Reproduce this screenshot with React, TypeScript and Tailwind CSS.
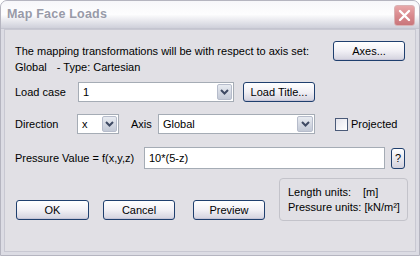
import { ReactNode } from 'react';

const font = { fontFamily: '"Liberation Sans", Arial, sans-serif' };

const XpButton = ({ children, className = '' }: { children: ReactNode; className?: string }) => (
  <div
    className={`flex items-center justify-center h-[20px] rounded-[3px] border border-[#1f3f6e] bg-linear-to-b from-[#ffffff] via-[#f1f0f5] to-[#d3d2de] text-[11px] text-black shadow-[inset_0_-1px_0_#c6c5d7] ${className}`}
  >
    {children}
  </div>
);

const DropArrow = ({ className = '' }: { className?: string }) => (
  <div
    className={`flex items-center justify-center h-full rounded-[2px] border border-[#b6bccb] bg-linear-to-b from-[#e8ebf1] to-[#c3c9d6] ${className}`}
  >
    <svg width="9" height="6" viewBox="0 0 9 6">
      <path d="M1 1 L4.5 4.5 L8 1" fill="none" stroke="#3e4a63" strokeWidth="2" />
    </svg>
  </div>
);

const Combo = ({ value, className = '', arrow = 'w-[15px]' }: { value: string; className?: string; arrow?: string }) => (
  <div className={`flex items-stretch h-[20px] border border-[#a5acb5] bg-white p-px ${className}`}>
    <div className="flex-1 flex items-center pl-[3px] text-[11px] text-black">{value}</div>
    <DropArrow className={arrow} />
  </div>
);

export default function App() {
  return (
    <div
      className="w-[420px] h-[256px] flex flex-col rounded-t-[7px] border border-[#b5b5c0] bg-[#dcdce4] overflow-hidden"
      style={font}
    >
      {/* title bar */}
      <div className="h-[28px] shrink-0 flex items-center justify-between pl-[6px] pr-[4px] bg-linear-to-b from-[#f7f7fa] via-[#fdfdfe] to-[#cfd0da] border-b border-[#c4c5d0]">
        <span className="text-[12.5px] font-bold text-[#989aa8] tracking-[0.2px]">Map Face Loads</span>
        <div className="w-[21px] h-[21px] mt-[2px] rounded-[3px] border border-[#d9b2b4] bg-linear-to-b from-[#e8a7a9] via-[#d98a8e] to-[#c9767b] flex items-center justify-center">
          <svg width="13" height="13" viewBox="0 0 13 13">
            <path d="M2 2 L11 11 M11 2 L2 11" stroke="#ffffff" strokeWidth="2.4" strokeLinecap="round" />
          </svg>
        </div>
      </div>

      {/* body */}
      <div className="flex-1 mx-[3px] mb-[3px] bg-[#e1e0e5] border border-[#c8c8d2] flex flex-col text-[11px] text-black">
        <div className="mt-[11px] h-[20px] flex items-center pl-[10px] pr-[10px]">
          <span>The mapping transformations will be with respect to axis set:</span>
          <XpButton className="ml-auto w-[72px]">Axes...</XpButton>
        </div>

        <div className="h-[12px] flex items-center pl-[10px]">
          <span>Global</span>
          <span className="ml-[10px]">- Type: Cartesian</span>
        </div>

        <div className="mt-[9px] h-[20px] flex items-center pl-[10px]">
          <span className="w-[63px]">Load case</span>
          <Combo value="1" className="w-[156px]" />
          <XpButton className="ml-[9px] w-[72px]">Load Title...</XpButton>
        </div>

        <div className="mt-[12px] h-[20px] flex items-center pl-[10px]">
          <span className="w-[62px]">Direction</span>
          <Combo value="x" className="w-[42px]" />
          <span className="ml-[12px] w-[27px]">Axis</span>
          <Combo value="Global" className="w-[157px]" arrow="w-[16px]" />
          <div className="ml-[20px] w-[13px] h-[13px] border border-[#4a5a78] bg-linear-to-br from-[#e4e4ec] to-[#ffffff]" />
          <span className="ml-[3px]">Projected</span>
        </div>

        <div className="mt-[13px] h-[22px] flex items-center pl-[10px]">
          <span className="w-[129px]">Pressure Value = f(x,y,z)</span>
          <div className="w-[241px] h-[22px] border border-[#a5acb5] bg-white flex items-center pl-[4px]">10*(5-z)</div>
          <div className="ml-[6px] w-[14px] h-[21px] rounded-[3px] border border-[#1f3f6e] bg-linear-to-b from-[#ffffff] to-[#d3d2de] flex items-center justify-center text-[11px]">
            ?
          </div>
        </div>

        <div className="mt-[9px] flex items-start pl-[11px]">
          <XpButton className="mt-[22px] w-[73px]">OK</XpButton>
          <XpButton className="mt-[22px] ml-[14px] w-[72px]">Cancel</XpButton>
          <XpButton className="mt-[22px] ml-[18px] w-[72px]">Preview</XpButton>
          <div className="ml-[14px] w-[129px] h-[43px] rounded-[4px] border border-[#c3c3ca] flex flex-col justify-center pl-[8px] gap-[2px] leading-[13px]">
            <div className="flex">
              <span className="w-[75px]">Length units:</span>
              <span>[m]</span>
            </div>
            <div>Pressure units: [kN/m²]</div>
          </div>
        </div>
      </div>
    </div>
  );
}
